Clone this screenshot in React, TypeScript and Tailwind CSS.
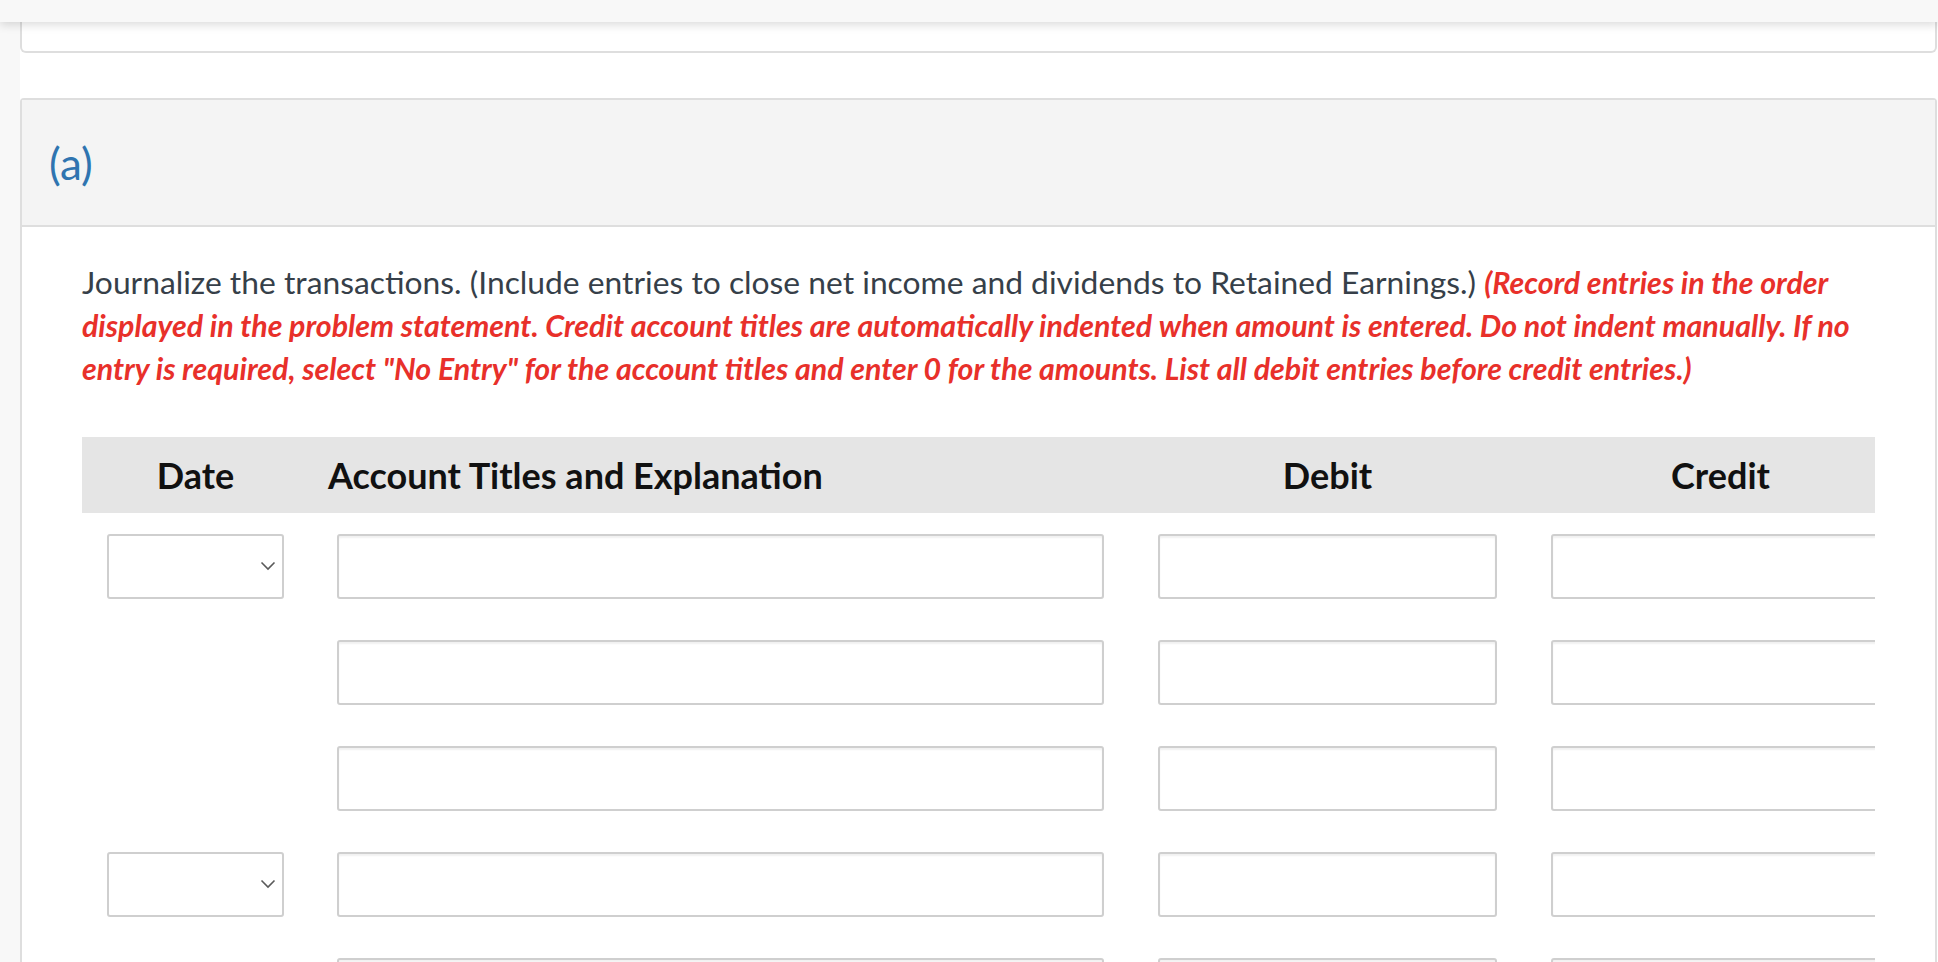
import React from "react";

function Chevron() {
  return (
    <svg width="16" height="10" viewBox="0 0 16 10" className="absolute right-[6px] top-1/2 -translate-y-1/2">
      <polyline points="1.5,1.5 8,8 14.5,1.5" fill="none" stroke="#5a5a5a" strokeWidth="1.6" />
    </svg>
  );
}

function Box({ className = "" }: { className?: string }) {
  return (
    <div
      className={
        "h-[65px] rounded-[3px] border-2 border-[#cfcfcf] bg-white shadow-[inset_0_2px_2px_rgba(0,0,0,0.06)] " +
        className
      }
    />
  );
}

function Row({ date }: { date: boolean }) {
  return (
    <div className="flex h-[106px] items-center">
      <div className="w-[229px] shrink-0 pl-[25px]">
        {date ? (
          <div className="relative h-[65px] w-[177px] rounded-[3px] border-2 border-[#cfcfcf] bg-white">
            <Chevron />
          </div>
        ) : null}
      </div>
      <div className="w-[820px] shrink-0 pl-[26px]">
        <Box className="w-[767px]" />
      </div>
      <div className="w-[393px] shrink-0 pl-[27px]">
        <Box className="w-[339px]" />
      </div>
      <div className="w-[393px] shrink-0 pl-[27px]">
        <Box className="w-[339px]" />
      </div>
    </div>
  );
}

export default function App() {
  return (
    <div className="flex h-[962px] flex-col overflow-hidden bg-white" style={{ fontFamily: "Lato, 'Noto Sans', sans-serif" }}>
      <div className="relative z-10 h-[22px] shrink-0 bg-[#f8f8f8] shadow-[0_3px_10px_rgba(0,0,0,0.14)]" />
      <div className="flex min-h-0 flex-1">
        <div className="w-[20px] shrink-0 bg-[#f8f8f8]" />
        <div className="min-w-0 flex-1 pr-[1px]">
          <div className="h-[31px] rounded-b-[6px] border-x-2 border-b-2 border-[#dedede] bg-white" />
          <div className="mt-[45px] rounded-t-[4px] border-x-2 border-t-2 border-[#dedede]">
            <div className="flex h-[127px] items-center border-b-2 border-[#dedede] bg-[#f4f4f4] pl-[27px]">
              <span className="text-[44px] leading-none text-[#2f74b0]">(a)</span>
            </div>
            <div className="px-[60px] pt-[34px]">
              <p className="text-[31.8px] leading-[43px] text-[#363f49]">
                Journalize the transactions. (Include entries to close net income and dividends to Retained Earnings.){" "}
                <span className="text-[30.35px] font-bold italic text-[#e8302a]">
                  (Record entries in the order
                  <br />
                  displayed in the problem statement. Credit account titles are automatically indented when amount is entered. Do not indent manually. If no
                  <br />
                  entry is required, select "No Entry" for the account titles and enter 0 for the amounts. List all debit entries before credit entries.)
                </span>
              </p>
              <div className="mt-[47px] overflow-hidden">
                <div className="flex h-[76px] items-center bg-[#e5e5e5] text-[36px] font-bold text-[#111]">
                  <div className="w-[229px] shrink-0 pl-[25px]">
                    <div className="w-[177px] text-center">Date</div>
                  </div>
                  <div className="w-[820px] shrink-0 pl-[17px]">Account Titles and Explanation</div>
                  <div className="w-[393px] shrink-0 pl-[27px]">
                    <div className="w-[339px] text-center">Debit</div>
                  </div>
                  <div className="w-[393px] shrink-0 pl-[27px]">
                    <div className="w-[339px] text-center">Credit</div>
                  </div>
                </div>
                <Row date />
                <Row date={false} />
                <Row date={false} />
                <Row date />
                <Row date={false} />
              </div>
            </div>
          </div>
        </div>
      </div>
    </div>
  );
}
